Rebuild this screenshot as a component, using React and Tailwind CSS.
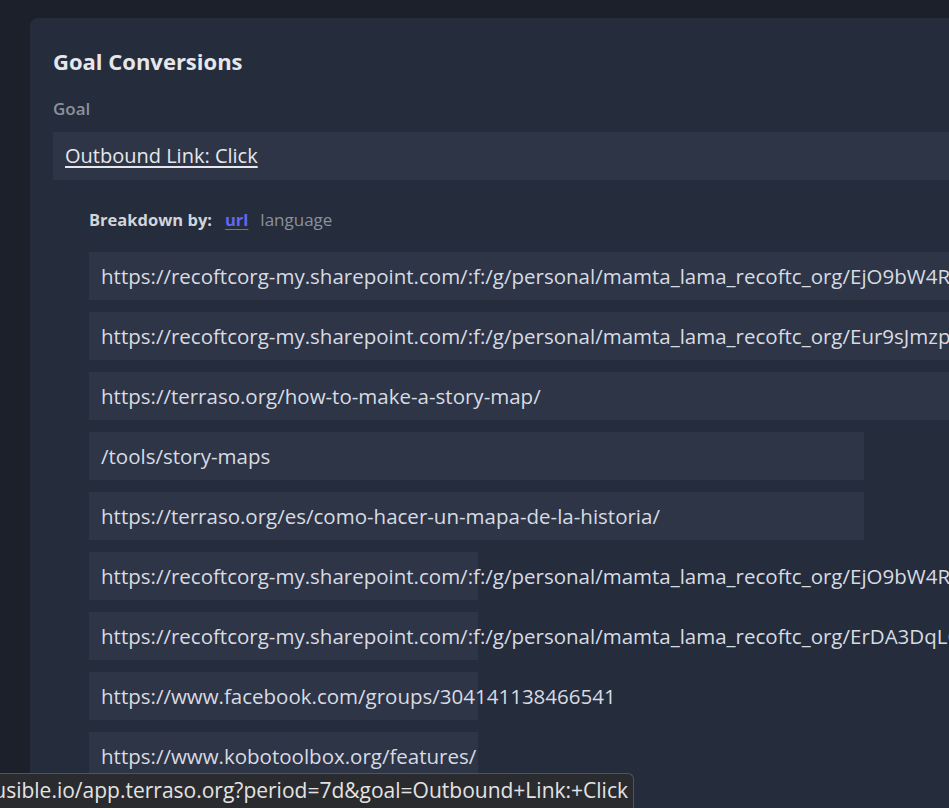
import React from 'react';

const rows = [
  { label: 'https://recoftcorg-my.sharepoint.com/:f:/g/personal/mamta_lama_recoftc_org/EjO9bW4RXk2s8', w: 'w-full' },
  { label: 'https://recoftcorg-my.sharepoint.com/:f:/g/personal/mamta_lama_recoftc_org/Eur9sJmzpHq1', w: 'w-full' },
  { label: 'https://terraso.org/how-to-make-a-story-map/', w: 'w-full' },
  { label: '/tools/story-maps', w: 'w-[775px]' },
  { label: 'https://terraso.org/es/como-hacer-un-mapa-de-la-historia/', w: 'w-[775px]' },
  { label: 'https://recoftcorg-my.sharepoint.com/:f:/g/personal/mamta_lama_recoftc_org/EjO9bW4RXk2s8', w: 'w-[389px]' },
  { label: 'https://recoftcorg-my.sharepoint.com/:f:/g/personal/mamta_lama_recoftc_org/ErDA3DqLGm7p', w: 'w-[389px]' },
  { label: 'https://www.facebook.com/groups/304141138466541', w: 'w-[389px]' },
  { label: 'https://www.kobotoolbox.org/features/', w: 'w-[389px]' },
];

export default function App() {
  return (
    <div className="relative h-[808px] w-[949px] overflow-hidden bg-[#1b202b] font-['Open_Sans',sans-serif]">
      <div className="pt-[18px] pl-[30px]">
        <div className="w-[1200px] h-[900px] rounded-lg bg-[#252c3c] pl-[23px] pt-[28px]">
          <h2 className="text-[22px] leading-[30px] font-bold text-[#e5e7eb]">Goal Conversions</h2>
          <div className="mt-[22px] text-[17px] leading-[22px] font-semibold text-[#8a919e]">Goal</div>
          <div className="mt-[12px] h-[48px] flex items-center bg-[#2e3547] pl-[12px]">
            <a className="text-[20px] text-[#e5e7eb] underline underline-offset-[3px]">Outbound Link: Click</a>
          </div>
          <div className="pl-[36px] pt-[28px]">
            <div className="flex items-center gap-[13px] h-[24px]">
              <span className="text-[16.5px] font-bold text-[#d1d5db]">Breakdown by:</span>
              <span className="text-[16.5px] font-bold text-[#6366f1] underline underline-offset-[3px]">url</span>
              <span className="text-[17px] text-[#8a919e] -ml-[1px]">language</span>
            </div>
            <div className="mt-[20px] flex flex-col gap-[12px]">
              {rows.map((r, i) => (
                <div key={i} className="relative h-[48px]">
                  <div className={`absolute inset-y-0 left-0 ${r.w} bg-[#2e3547]`} />
                  <div className="relative h-full flex items-center pl-[12px] text-[20.5px] text-[#d7dbe2] whitespace-nowrap">
                    {r.label}
                  </div>
                </div>
              ))}
            </div>
          </div>
        </div>
      </div>
      <div className="absolute left-0 bottom-0 h-[35px] w-[634px] flex items-center justify-end pr-[5px] bg-[#2a2b2e] border-t border-r border-[#52545a] rounded-tr-md text-[21px] text-[#e3e3e3] whitespace-nowrap overflow-hidden">
        https://plausible.io/app.terraso.org?period=7d&amp;goal=Outbound+Link:+Click
      </div>
    </div>
  );
}
